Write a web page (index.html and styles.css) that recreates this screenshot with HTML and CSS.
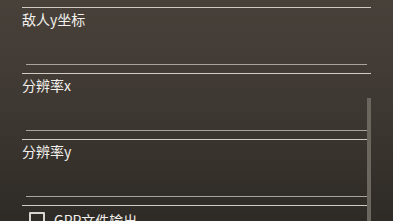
FILE: index.html
```html
<!DOCTYPE html>
<html lang="zh">
<head>
  <meta charset="UTF-8">
  <meta name="viewport" content="width=device-width, initial-scale=1.0">
  <title>设置</title>
  <link rel="stylesheet" href="styles.css">
</head>
<body>

<div class="screen">
  <div class="form">
    <div class="sep"></div>
    <div class="field">
      <div class="label">敌人y坐标</div>
      <div class="input"></div>
    </div>
    <div class="sep"></div>
    <div class="field">
      <div class="label">分辨率x</div>
      <div class="input"></div>
    </div>
    <div class="sep"></div>
    <div class="field">
      <div class="label">分辨率y</div>
      <div class="input"></div>
    </div>
    <div class="sep"></div>
    <div class="check">
      <span class="box"></span>
      <span class="check-text">GPP文件输出</span>
    </div>
  </div>
  <div class="scrollbar"></div>
</div>

</body>
</html>
```

FILE: styles.css
```css
html, body {
  margin: 0;
  padding: 0;
  height: 221px;
  overflow: hidden;
}
body {
  font-family: "Noto Sans CJK SC", "Noto Sans", sans-serif;
  color: #f2f0ec;
  background: linear-gradient(to bottom, #48413a 0%, #3e3832 50%, #2e2a25 100%);
}
.screen {
  position: relative;
  height: 221px;
}
.form {
  padding-top: 7px;
  margin-left: 22px;
  width: 349px;
}
.sep {
  height: 1px;
  background-color: #cfcbc4;
}
.field {
  padding-bottom: 8px;
}
.label {
  font-size: 14px;
  line-height: 18px;
  height: 18px;
  padding-top: 2px;
}
.input {
  height: 36px;
  margin: 0 4px;
  border-bottom: 1px solid #a8a49d;
}
.check {
  display: flex;
  align-items: center;
  padding-top: 6px;
  padding-left: 7px;
}
.box {
  width: 12px;
  height: 12px;
  border: 2px solid #d8d5cf;
  border-radius: 1px;
}
.check-text {
  font-size: 14px;
  line-height: 16px;
  margin-left: 9px;
}
.scrollbar {
  position: absolute;
  left: 367px;
  top: 98px;
  width: 4px;
  height: 123px;
  background-color: #6b675f;
}
```
